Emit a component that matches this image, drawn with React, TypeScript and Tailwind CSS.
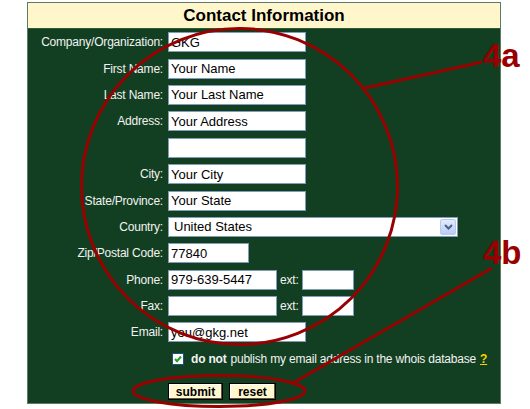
import React from 'react';

const font = "font-['Liberation_Sans',Arial,sans-serif]";

const Field: React.FC<{ value?: string; className?: string }> = ({ value = '', className = 'w-[138px]' }) => (
  <input
    readOnly
    defaultValue={value}
    className={`${className} h-[20px] border border-[#7f9db9] bg-white px-[2px] text-[13px] leading-none text-black outline-none ${font}`}
  />
);

const Row: React.FC<{ label?: string; children: React.ReactNode }> = ({ label, children }) => (
  <div className="flex h-[26.4px] items-center">
    <div className="w-[140px] shrink-0 pr-[5px] text-right text-[12px] tracking-[-0.2px] text-[#f2f2f2]">{label}</div>
    <div className="flex items-center">{children}</div>
  </div>
);

const Ext: React.FC = () => (
  <>
    <span className="ml-[3px] mr-[3px] text-[12px] tracking-[-0.2px] text-[#f2f2f2]">ext:</span>
    <Field className="w-[52px]" />
  </>
);

const Annotations: React.FC = () => (
  <>
    <svg className="pointer-events-none absolute inset-0" width="530" height="409" viewBox="0 0 530 409">
      <g fill="none" stroke="#990000" strokeWidth="3">
        <circle cx="239.5" cy="186.5" r="158" />
        <line x1="365" y1="88" x2="482" y2="62" />
        <ellipse cx="219" cy="391" rx="86" ry="15.5" />
        <line x1="492" y1="268" x2="293" y2="383" />
      </g>
    </svg>
    <span className={`absolute left-[483px] top-[39px] text-[33px] font-bold leading-none text-[#990000] ${font}`}>4a</span>
    <span className={`absolute left-[483px] top-[236px] text-[33px] font-bold leading-none text-[#990000] ${font}`}>4b</span>
  </>
);

const App: React.FC = () => {
  return (
    <div className={`relative h-[409px] w-[530px] overflow-hidden bg-white pl-[27px] pt-[2px] ${font}`}>
      <div className="w-[474px] border border-[#5b7b64] bg-[#123f21]">
        <div className="flex h-[26px] items-center justify-center border-b border-[#2e5a3a] bg-[#fff6cc] text-[17px] font-bold text-black">
          Contact Information
        </div>

        <Row label="Company/Organization:"><Field value="GKG" /></Row>
        <Row label="First Name:"><Field value="Your Name" /></Row>
        <Row label="Last Name:"><Field value="Your Last Name" /></Row>
        <Row label="Address:"><Field value="Your Address" /></Row>
        <Row><Field /></Row>
        <Row label="City:"><Field value="Your City" /></Row>
        <Row label="State/Province:"><Field value="Your State" /></Row>
        <Row label="Country:">
          <div className="flex h-[20px] w-[290px] items-center justify-between border border-[#7f9db9] bg-white pl-[5px] pr-[1px] text-[13px] text-black">
            <span>United States</span>
            <span className="flex h-[16px] w-[16px] items-center justify-center rounded-[2px] border border-[#b7c9f2] bg-gradient-to-b from-[#e3ebfd] to-[#b8cdf8]">
              <svg width="9" height="6" viewBox="0 0 9 6">
                <path d="M1 1l3.5 3.5L8 1" fill="none" stroke="#4d6185" strokeWidth="2" />
              </svg>
            </span>
          </div>
        </Row>
        <Row label="Zip/Postal Code:"><Field value="77840" className="w-[81px]" /></Row>
        <Row label="Phone:"><Field value="979-639-5447" className="w-[109px]" /><Ext /></Row>
        <Row label="Fax:"><Field className="w-[109px]" /><Ext /></Row>
        <Row label="Email:"><Field value="you@gkg.net" /></Row>

        <div className="flex h-[26.4px] items-center pl-[144px] text-[12px] tracking-[-0.2px] text-[#f2f2f2]">
          <span className="mr-[7px] flex h-[12px] w-[12px] items-center justify-center border border-[#1c5180] bg-white">
            <svg width="8" height="8" viewBox="0 0 8 8">
              <path d="M1 4l2 2.2L7 1.5" fill="none" stroke="#21a121" strokeWidth="2" />
            </svg>
          </span>
          <span className="font-bold">do not</span>
          <span className="ml-[4px]">publish my email address in the whois database</span>
          <span className="ml-[4px] font-bold text-[#f5d200] underline">?</span>
        </div>

        <div className="flex gap-[6px] pb-[3px] pl-[140px] pt-[11px]">
          <button className="h-[17px] w-[55px] border border-black bg-[#fff7d0] text-[12px] font-bold leading-none text-black shadow-[inset_-1px_-1px_0_#5f5a3c,inset_1px_1px_0_#ffffff]">
            submit
          </button>
          <button className="h-[17px] w-[47px] border border-black bg-[#fff7d0] text-[12px] font-bold leading-none text-black shadow-[inset_-1px_-1px_0_#5f5a3c,inset_1px_1px_0_#ffffff]">
            reset
          </button>
        </div>
      </div>
      <Annotations />
    </div>
  );
};

export default App;
